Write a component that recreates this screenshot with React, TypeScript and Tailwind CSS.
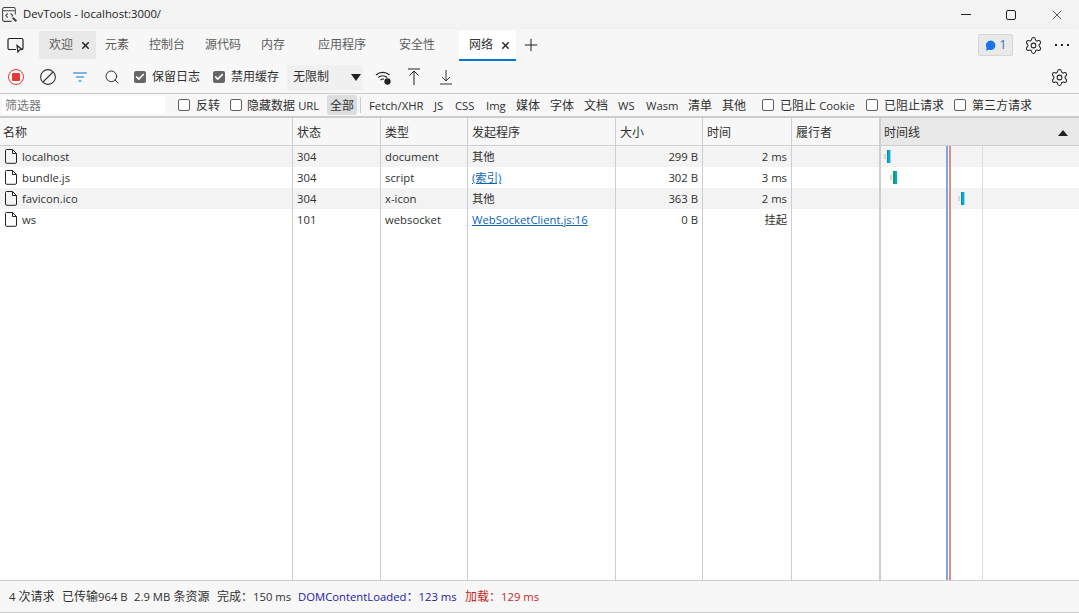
import type { ReactNode } from "react";
import { Check, Plus, Search, Settings, X } from "lucide-react";

const font = { fontFamily: '"Open Sans", "Noto Sans CJK SC", sans-serif' };

const colsClass =
  "grid grid-cols-[293px_88px_87px_148px_87px_89px_88px_1fr]";

const tabs = [
  { label: "元素", w: "w-[44px]" },
  { label: "控制台", w: "w-[56px]" },
  { label: "源代码", w: "w-[56px]" },
  { label: "内存", w: "w-[57px]" },
  { label: "应用程序", w: "w-[81px]" },
  { label: "安全性", w: "w-[59px]" },
];

const filters = [
  { label: "Fetch/XHR", w: "w-[65px]", latin: true },
  { label: "JS", w: "w-[21px]", latin: true },
  { label: "CSS", w: "w-[31px]", latin: true },
  { label: "Img", w: "w-[30px]", latin: true },
  { label: "媒体", w: "w-[34px]" },
  { label: "字体", w: "w-[34px]" },
  { label: "文档", w: "w-[34px]" },
  { label: "WS", w: "w-[28px]", latin: true },
  { label: "Wasm", w: "w-[42px]", latin: true },
  { label: "清单", w: "w-[34px]" },
  { label: "其他", w: "w-[40px]" },
];

const headers = [
  { label: "名称", pl: "pl-[3px]" },
  { label: "状态", pl: "pl-[4px]" },
  { label: "类型", pl: "pl-[4px]" },
  { label: "发起程序", pl: "pl-[4px]" },
  { label: "大小", pl: "pl-[4px]" },
  { label: "时间", pl: "pl-[4px]" },
  { label: "履行者", pl: "pl-[4px]" },
];

const rows = [
  { name: "localhost", status: "304", type: "document", initiator: "其他", size: "299 B", time: "2 ms" },
  { name: "bundle.js", status: "304", type: "script", initiator: "(索引)", link: true, size: "302 B", time: "3 ms" },
  { name: "favicon.ico", status: "304", type: "x-icon", initiator: "其他", size: "363 B", time: "2 ms" },
  { name: "ws", status: "101", type: "websocket", initiator: "WebSocketClient.js:16", link: true, size: "0 B", time: "挂起" },
];

// Open Sans runs wider than the Segoe UI in the picture, so latin text gets a smaller size
const L = ({ children }: { children: ReactNode }) => <span className="text-[11.3px]">{children}</span>;

const Box = ({ checked }: { checked?: boolean }) =>
  checked ? (
    <span className="flex h-[12px] w-[12px] items-center justify-center rounded-[2px] bg-[#666666]">
      <Check className="h-[10px] w-[10px] text-white" strokeWidth={4} />
    </span>
  ) : (
    <span className="h-[12px] w-[12px] rounded-[2px] border border-[#5f5f5f] bg-white" />
  );

const FileIcon = () => (
  <svg width="12" height="15" viewBox="0 0 12 15" fill="none" stroke="#222" strokeWidth="1" className="mb-[3px] mr-[5px] shrink-0">
    <path d="M1.5 .5h6l4 4v8.5a1.3 1.3 0 0 1-1.3 1.3H1.8a1.3 1.3 0 0 1-1.3-1.3V1.5a1 1 0 0 1 1-1z" />
    <path d="M7.5 .5v4h4" />
  </svg>
);

export default function App() {
  return (
    <div style={font} className="flex h-[613px] w-[1079px] flex-col overflow-hidden bg-white text-[12px] text-[#303030]">
      {/* title bar */}
      <div className="flex h-[29px] shrink-0 items-center bg-[#f3f3f3] pl-[1px]">
        <svg width="18" height="18" viewBox="0 0 17 17" fill="none" stroke="#444" strokeWidth="1" className="mr-[4px]">
          <path d="M10 14.5H3a1.5 1.5 0 0 1-1.5-1.5V3A1.5 1.5 0 0 1 3 1.500h9A1.500 1.500 0 0 1 13.500 3v5" />
          <path d="M2 4.500h11M6.500 7 4.500 9l2 2M9 7l2 2-1 1" />
          <path d="M11 11l3.500 3.500" strokeWidth="2" />
        </svg>
        <span className="text-[11.3px] text-[#222222]">DevTools - localhost:3000/</span>
        <div className="ml-auto flex items-center">
          <span className="h-px w-[10px] bg-[#222222]" />
          <span className="ml-[35px] h-[10px] w-[10px] rounded-[2px] border border-[#222222]" />
          <X className="ml-[33px] mr-[14px] h-[16px] w-[16px] text-[#222222]" strokeWidth={1.1} />
        </div>
      </div>

      {/* tab bar */}
      <div className="flex h-[32px] shrink-0 items-center bg-[#f7f7f7] shadow-[0_1px_2px_rgba(0,0,0,0.12)]">
        <svg width="18" height="16" viewBox="0 0 18 16" fill="none" stroke="#222" strokeWidth="1.2" className="ml-[7px] mr-[14px]">
          <path d="M9 12.500H2.500a1.500 1.500 0 0 1-1.500-1.500V3a1.500 1.500 0 0 1 1.500-1.500h12A1.500 1.500 0 0 1 16 3v8a1.500 1.500 0 0 1-1 1.400" />
          <path d="M10 8.500l1 6.500 1.500-2 2.500-.5z" fill="#fff" />
        </svg>
        <div className="flex h-[28px] w-[57px] items-center rounded-[2px] bg-[#e9e9e9] pl-[10px] text-[#5c5c5c]">
          欢迎
          <X className="ml-[7px] h-[11px] w-[11px] text-[#222222]" strokeWidth={3} />
        </div>
        <div className="flex pl-[9px] text-[#5c5c5c]">
          {tabs.map((t) => (
            <span key={t.label} className={t.w}>{t.label}</span>
          ))}
        </div>
        <div className="ml-[1px] flex h-[30px] w-[57px] items-center self-end border-b-2 border-[#0078d4] bg-white pl-[10px] text-[#333333]">
          网络
          <X className="ml-[7px] h-[11px] w-[11px] text-[#222222]" strokeWidth={3} />
        </div>
        <Plus className="ml-[5px] h-[20px] w-[20px] text-[#222222]" strokeWidth={1.2} />
        <div className="ml-auto flex items-center">
          <div className="flex h-[22px] w-[35px] items-center justify-center gap-[4px] rounded-[2px] border border-[#d6d6d6] bg-[#e9e9e9] text-[#2f6fb7]">
            <svg width="11" height="11" viewBox="0 0 11 11">
              <path d="M5.700.5a4.800 4.800 0 1 1-1.800 9.300L.8 10.500l.9-2.600A4.800 4.800 0 0 1 5.700.5z" fill="#1a73e8" />
            </svg>
            1
          </div>
          <Settings className="ml-[11px] h-[19px] w-[19px] text-[#222222]" strokeWidth={1.3} />
          <div className="ml-[12px] mr-[10px] flex gap-[4px]">
            <span className="h-[2px] w-[2px] bg-[#222222]" />
            <span className="h-[2px] w-[2px] bg-[#222222]" />
            <span className="h-[2px] w-[2px] bg-[#222222]" />
          </div>
        </div>
      </div>

      {/* network toolbar */}
      <div className="flex h-[33px] shrink-0 items-center border-b border-[#cccccc] bg-[#f7f7f7]">
        <span className="ml-[8px] flex h-[16px] w-[16px] items-center justify-center rounded-full border border-[#e53935]">
          <span className="h-[8px] w-[8px] rounded-[1px] bg-[#e53935]" />
        </span>
        <svg width="16" height="16" viewBox="0 0 16 16" fill="none" stroke="#333" strokeWidth="1.100" className="ml-[16px]">
          <circle cx="8" cy="8" r="7.400" />
          <path d="M3 13 13 3" />
        </svg>
        <svg width="14" height="10" viewBox="0 0 14 10" fill="none" stroke="#0078d4" strokeWidth="1.100" className="ml-[17px]">
          <path d="M0 1h14M3 5h8M5.500 9h3" />
        </svg>
        <Search className="ml-[17px] h-[16px] w-[16px] text-[#222222]" strokeWidth={1.4} />
        <div className="ml-[14px] flex items-center">
          <Box checked />
          <span className="ml-[6px] w-[61px]">保留日志</span>
          <Box checked />
          <span className="ml-[6px] w-[56px]">禁用缓存</span>
        </div>
        <div className="flex h-[25px] w-[76px] items-center justify-between rounded-[2px] bg-[#f0f0f0] pl-[6px] pr-[2px]">
          无限制
          <span className="h-0 w-0 border-x-[5px] border-t-[7px] border-x-transparent border-t-[#222222]" />
        </div>
        <svg width="17" height="15" viewBox="0 0 17 15" fill="none" stroke="#222" strokeWidth="1.100" className="ml-[12px]">
          <path d="M1 5a10 10 0 0 1 13.500 0M3.200 7.500a7 7 0 0 1 9 0M5.500 10a3.800 3.800 0 0 1 3.500-.9" />
          <circle cx="12.500" cy="11.500" r="2.600" fill="#222" />
        </svg>
        <svg width="14" height="18" viewBox="0 0 14 18" fill="none" stroke="#222" strokeWidth="1" className="ml-[15px]">
          <path d="M1 1h12M7 3v14M2.500 7.500 7 3l4.500 4.500" />
        </svg>
        <svg width="14" height="16" viewBox="0 0 14 16" fill="none" stroke="#333" strokeWidth="1" className="ml-[18px]">
          <path d="M1 15h12M7 1v11M3 8l4 4 4-4" />
        </svg>
        <Settings className="ml-auto mr-[10px] h-[19px] w-[19px] text-[#222222]" strokeWidth={1.3} />
      </div>

      {/* filter bar */}
      <div className="flex h-[24px] shrink-0 items-center border-b-[2px] border-[#cccccc] bg-[#f7f7f7]">
        <div className="ml-[2px] flex h-[18px] w-[163px] items-center bg-white pl-[3px] pt-[2px] text-[#757575]">筛选器</div>
        <div className="ml-[13px] flex items-center">
          <Box />
          <span className="ml-[6px] w-[34px] pt-[2px]">反转</span>
          <Box />
          <span className="ml-[5px] w-[80px] whitespace-nowrap pt-[2px]">隐藏数据 <L>URL</L></span>
        </div>
        <span className="flex h-[20px] w-[30px] items-center justify-center rounded-[3px] bg-[#dddddd] pt-[2px]">全部</span>
        <span className="ml-[3px] mr-[8px] h-[16px] w-px bg-[#cccccc]" />
        <div className="flex items-center whitespace-nowrap pt-[2px]">
          {filters.map((f) => (
            <span key={f.label} className={f.w}>
              {f.latin ? <L>{f.label}</L> : f.label}
            </span>
          ))}
        </div>
        <div className="flex items-center whitespace-nowrap">
          <Box />
          <span className="ml-[6px] w-[86px] pt-[2px]">已阻止 <L>Cookie</L></span>
          <Box />
          <span className="ml-[6px] w-[70px] pt-[2px]">已阻止请求</span>
          <Box />
          <span className="ml-[6px] pt-[2px]">第三方请求</span>
        </div>
      </div>

      {/* table header */}
      <div className={`${colsClass} h-[28px] shrink-0 border-b border-[#cdcdd4] bg-[#f7f7f7]`}>
        {headers.map((h) => (
          <div key={h.label} className={`flex items-center border-r border-[#cdcdd4] pt-[2px] ${h.pl}`}>
            {h.label}
          </div>
        ))}
        <div className="flex items-center justify-between border-l border-[#cdcdd4] bg-[#e8e8e8] pl-[3px] pr-[11px] pt-[2px]">
          时间线
          <span className="h-0 w-0 border-x-[5px] border-b-[6px] border-x-transparent border-b-[#222222]" />
        </div>
      </div>

      {/* table body */}
      <div className="relative flex min-h-0 flex-1 flex-col">
        {rows.map((r, i) => (
          <div key={r.name} className={`${colsClass} h-[21px] shrink-0 text-[11.3px] ${i % 2 === 0 ? "bg-[#f3f3f3]" : "bg-white"}`}>
            <div className="flex items-center border-r border-[#cdcdd4] pl-[5px] pt-[2px]">
              <FileIcon />
              {r.name}
            </div>
            <div className="flex items-center border-r border-[#cdcdd4] pl-[4px] pt-[2px]">{r.status}</div>
            <div className="flex items-center border-r border-[#cdcdd4] pl-[4px] pt-[2px]">{r.type}</div>
            <div className={`flex items-center border-r border-[#cdcdd4] pl-[4px] pt-[2px] ${r.link ? "text-[#0b64b4] underline" : ""}`}>
              {r.initiator}
            </div>
            <div className="flex items-center justify-end border-r border-[#cdcdd4] pr-[4px] pt-[2px]">{r.size}</div>
            <div className="flex items-center justify-end border-r border-[#cdcdd4] pr-[4px] pt-[2px]">{r.time}</div>
            <div className="border-r border-[#cdcdd4]" />
            <div className="border-l border-[#cdcdd4]" />
          </div>
        ))}
        <div className={`${colsClass} flex-1`}>
          {[0, 1, 2, 3, 4, 5, 6].map((c) => (
            <div key={c} className="border-r border-[#cdcdd4]" />
          ))}
          <div className="border-l border-[#cdcdd4]" />
        </div>

        {/* waterfall drawing */}
        <svg className="pointer-events-none absolute left-[881px] top-0 h-full w-[198px]" viewBox="0 0 198 434" preserveAspectRatio="none">
          <rect x="65" y="0" width="2" height="434" fill="#7ea7e2" />
          <rect x="68" y="0" width="2" height="434" fill="#dc8c8c" />
          <rect x="101" y="0" width="1" height="434" fill="#dddddd" />

          <rect x="3" y="8" width="2" height="5" fill="#d6d6d6" />
          <rect x="6" y="4" width="1" height="13" fill="#0a9d58" />
          <rect x="7" y="4" width="2.400" height="13" fill="#00a6f0" />

          <rect x="9" y="29" width="2" height="5" fill="#d6d6d6" />
          <rect x="12" y="25" width="2" height="13" fill="#0aa14f" />
          <rect x="14" y="25" width="2" height="13" fill="#00a6f0" />

          <rect x="77" y="50" width="2" height="5" fill="#d6d6d6" />
          <rect x="80" y="46" width="1" height="13" fill="#0a9d58" />
          <rect x="81" y="46" width="2.400" height="13" fill="#00a6f0" />
        </svg>
      </div>

      {/* status bar */}
      <div className="flex h-[33px] shrink-0 items-center border-y border-[#cccccc] bg-[#f7f7f7] pl-[9px] whitespace-nowrap">
        <span className="w-[53px]"><L>4</L> 次请求</span>
        <span className="w-[72px]">已传输<L>964 B</L></span>
        <span className="w-[83px]"><L>2.9 MB</L> 条资源</span>
        <span className="w-[81px]">完成：<L>150 ms</L></span>
        <span className="w-[167px] text-[#1a1aa6]"><L>DOMContentLoaded</L>：<L>123 ms</L></span>
        <span className="text-[#c62828]">加载：<L>129 ms</L></span>
      </div>
    </div>
  );
}
